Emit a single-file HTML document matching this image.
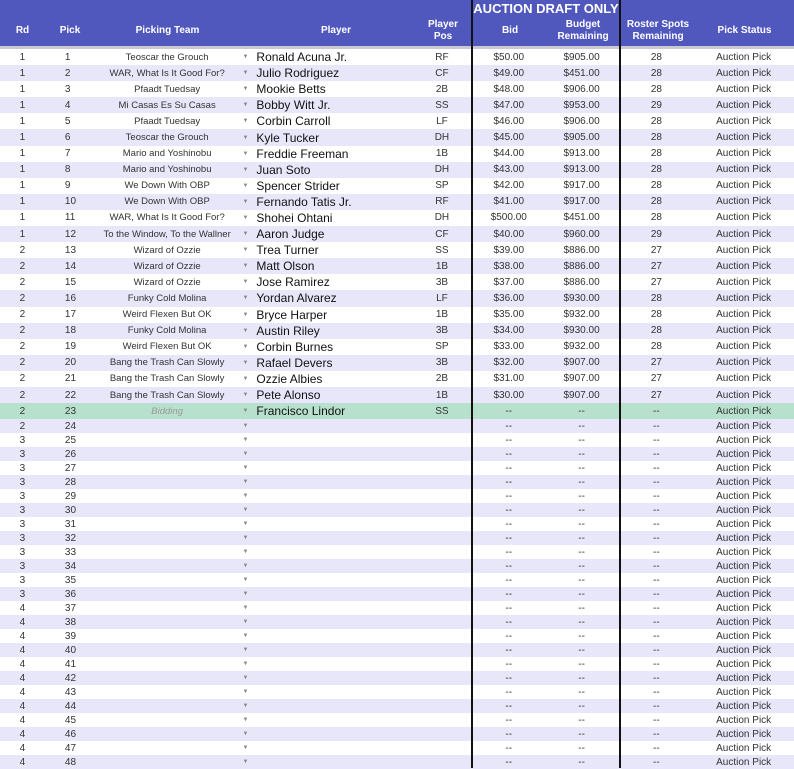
<!DOCTYPE html>
<html><head><meta charset="utf-8"><style>
*{margin:0;padding:0;box-sizing:border-box}
body{width:794px;height:768px;overflow:hidden;background:#fff;font-family:"Liberation Sans",sans-serif;font-size:10px;color:#333;position:relative}
.hdr{position:absolute;left:0;top:0;width:794px;height:46px;background:#5058be;color:#fff;font-weight:bold;font-size:10px}
.hdr div{position:absolute;text-align:center;line-height:12px;white-space:nowrap}
.sep{position:absolute;left:0;top:46px;width:794px;height:3px;background:#c9c9d4}
.r{display:flex;height:16.1px;align-items:center;white-space:nowrap}
.s{height:14px}
.r:nth-child(even){background:#e8e7fa}
.r.g{background:#b7e1cd}
.r span{display:block;text-align:center;overflow:hidden}
.a{width:45px}.b{width:50px;text-align:left!important;padding-left:20px}.c{width:145px;font-size:9.5px}
.d{width:12px;font-size:6px;color:#888}
.e{width:163px;text-align:left!important;font-size:12px;color:#111;padding-left:5px}
.f{width:56px}.h{width:74px}.i{width:72px}.j{width:74px}.k{width:101px}
.rows{position:absolute;top:49px;left:0;width:794px}
.vl{position:absolute;top:0;width:2px;height:768px;background:#111}
</style></head><body>
<div class="hdr">
<div style="left:0;width:45px;top:25px">Rd</div>
<div style="left:45px;width:50px;top:25px">Pick</div>
<div style="left:95px;width:145px;top:25px">Picking Team</div>
<div style="left:252px;width:168px;top:25px">Player</div>
<div style="left:415px;width:56px;top:19px">Player<br>Pos</div>
<div style="left:473px;width:146px;top:1px;font-size:13px;line-height:16px">AUCTION DRAFT ONLY</div>
<div style="left:473px;width:74px;top:25px">Bid</div>
<div style="left:547px;width:72px;top:19px">Budget<br>Remaining</div>
<div style="left:621px;width:74px;top:19px">Roster Spots<br>Remaining</div>
<div style="left:695px;width:99px;top:25px">Pick Status</div>
</div>
<div class="sep"></div>
<div class="rows">
<div class="r"><span class="a">1</span><span class="b">1</span><span class="c">Teoscar the Grouch</span><span class="d">▼</span><span class="e">Ronald Acuna Jr.</span><span class="f">RF</span><span style="width:2px"></span><span class="h">$50.00</span><span class="i">$905.00</span><span style="width:2px"></span><span class="j">28</span><span class="k">Auction Pick</span></div>
<div class="r"><span class="a">1</span><span class="b">2</span><span class="c">WAR, What Is It Good For?</span><span class="d">▼</span><span class="e">Julio Rodriguez</span><span class="f">CF</span><span style="width:2px"></span><span class="h">$49.00</span><span class="i">$451.00</span><span style="width:2px"></span><span class="j">28</span><span class="k">Auction Pick</span></div>
<div class="r"><span class="a">1</span><span class="b">3</span><span class="c">Pfaadt Tuedsay</span><span class="d">▼</span><span class="e">Mookie Betts</span><span class="f">2B</span><span style="width:2px"></span><span class="h">$48.00</span><span class="i">$906.00</span><span style="width:2px"></span><span class="j">28</span><span class="k">Auction Pick</span></div>
<div class="r"><span class="a">1</span><span class="b">4</span><span class="c">Mi Casas Es Su Casas</span><span class="d">▼</span><span class="e">Bobby Witt Jr.</span><span class="f">SS</span><span style="width:2px"></span><span class="h">$47.00</span><span class="i">$953.00</span><span style="width:2px"></span><span class="j">29</span><span class="k">Auction Pick</span></div>
<div class="r"><span class="a">1</span><span class="b">5</span><span class="c">Pfaadt Tuedsay</span><span class="d">▼</span><span class="e">Corbin Carroll</span><span class="f">LF</span><span style="width:2px"></span><span class="h">$46.00</span><span class="i">$906.00</span><span style="width:2px"></span><span class="j">28</span><span class="k">Auction Pick</span></div>
<div class="r"><span class="a">1</span><span class="b">6</span><span class="c">Teoscar the Grouch</span><span class="d">▼</span><span class="e">Kyle Tucker</span><span class="f">DH</span><span style="width:2px"></span><span class="h">$45.00</span><span class="i">$905.00</span><span style="width:2px"></span><span class="j">28</span><span class="k">Auction Pick</span></div>
<div class="r"><span class="a">1</span><span class="b">7</span><span class="c">Mario and Yoshinobu</span><span class="d">▼</span><span class="e">Freddie Freeman</span><span class="f">1B</span><span style="width:2px"></span><span class="h">$44.00</span><span class="i">$913.00</span><span style="width:2px"></span><span class="j">28</span><span class="k">Auction Pick</span></div>
<div class="r"><span class="a">1</span><span class="b">8</span><span class="c">Mario and Yoshinobu</span><span class="d">▼</span><span class="e">Juan Soto</span><span class="f">DH</span><span style="width:2px"></span><span class="h">$43.00</span><span class="i">$913.00</span><span style="width:2px"></span><span class="j">28</span><span class="k">Auction Pick</span></div>
<div class="r"><span class="a">1</span><span class="b">9</span><span class="c">We Down With OBP</span><span class="d">▼</span><span class="e">Spencer Strider</span><span class="f">SP</span><span style="width:2px"></span><span class="h">$42.00</span><span class="i">$917.00</span><span style="width:2px"></span><span class="j">28</span><span class="k">Auction Pick</span></div>
<div class="r"><span class="a">1</span><span class="b">10</span><span class="c">We Down With OBP</span><span class="d">▼</span><span class="e">Fernando Tatis Jr.</span><span class="f">RF</span><span style="width:2px"></span><span class="h">$41.00</span><span class="i">$917.00</span><span style="width:2px"></span><span class="j">28</span><span class="k">Auction Pick</span></div>
<div class="r"><span class="a">1</span><span class="b">11</span><span class="c">WAR, What Is It Good For?</span><span class="d">▼</span><span class="e">Shohei Ohtani</span><span class="f">DH</span><span style="width:2px"></span><span class="h">$500.00</span><span class="i">$451.00</span><span style="width:2px"></span><span class="j">28</span><span class="k">Auction Pick</span></div>
<div class="r"><span class="a">1</span><span class="b">12</span><span class="c">To the Window, To the Wallner</span><span class="d">▼</span><span class="e">Aaron Judge</span><span class="f">CF</span><span style="width:2px"></span><span class="h">$40.00</span><span class="i">$960.00</span><span style="width:2px"></span><span class="j">29</span><span class="k">Auction Pick</span></div>
<div class="r"><span class="a">2</span><span class="b">13</span><span class="c">Wizard of Ozzie</span><span class="d">▼</span><span class="e">Trea Turner</span><span class="f">SS</span><span style="width:2px"></span><span class="h">$39.00</span><span class="i">$886.00</span><span style="width:2px"></span><span class="j">27</span><span class="k">Auction Pick</span></div>
<div class="r"><span class="a">2</span><span class="b">14</span><span class="c">Wizard of Ozzie</span><span class="d">▼</span><span class="e">Matt Olson</span><span class="f">1B</span><span style="width:2px"></span><span class="h">$38.00</span><span class="i">$886.00</span><span style="width:2px"></span><span class="j">27</span><span class="k">Auction Pick</span></div>
<div class="r"><span class="a">2</span><span class="b">15</span><span class="c">Wizard of Ozzie</span><span class="d">▼</span><span class="e">Jose Ramirez</span><span class="f">3B</span><span style="width:2px"></span><span class="h">$37.00</span><span class="i">$886.00</span><span style="width:2px"></span><span class="j">27</span><span class="k">Auction Pick</span></div>
<div class="r"><span class="a">2</span><span class="b">16</span><span class="c">Funky Cold Molina</span><span class="d">▼</span><span class="e">Yordan Alvarez</span><span class="f">LF</span><span style="width:2px"></span><span class="h">$36.00</span><span class="i">$930.00</span><span style="width:2px"></span><span class="j">28</span><span class="k">Auction Pick</span></div>
<div class="r"><span class="a">2</span><span class="b">17</span><span class="c">Weird Flexen But OK</span><span class="d">▼</span><span class="e">Bryce Harper</span><span class="f">1B</span><span style="width:2px"></span><span class="h">$35.00</span><span class="i">$932.00</span><span style="width:2px"></span><span class="j">28</span><span class="k">Auction Pick</span></div>
<div class="r"><span class="a">2</span><span class="b">18</span><span class="c">Funky Cold Molina</span><span class="d">▼</span><span class="e">Austin Riley</span><span class="f">3B</span><span style="width:2px"></span><span class="h">$34.00</span><span class="i">$930.00</span><span style="width:2px"></span><span class="j">28</span><span class="k">Auction Pick</span></div>
<div class="r"><span class="a">2</span><span class="b">19</span><span class="c">Weird Flexen But OK</span><span class="d">▼</span><span class="e">Corbin Burnes</span><span class="f">SP</span><span style="width:2px"></span><span class="h">$33.00</span><span class="i">$932.00</span><span style="width:2px"></span><span class="j">28</span><span class="k">Auction Pick</span></div>
<div class="r"><span class="a">2</span><span class="b">20</span><span class="c">Bang the Trash Can Slowly</span><span class="d">▼</span><span class="e">Rafael Devers</span><span class="f">3B</span><span style="width:2px"></span><span class="h">$32.00</span><span class="i">$907.00</span><span style="width:2px"></span><span class="j">27</span><span class="k">Auction Pick</span></div>
<div class="r"><span class="a">2</span><span class="b">21</span><span class="c">Bang the Trash Can Slowly</span><span class="d">▼</span><span class="e">Ozzie Albies</span><span class="f">2B</span><span style="width:2px"></span><span class="h">$31.00</span><span class="i">$907.00</span><span style="width:2px"></span><span class="j">27</span><span class="k">Auction Pick</span></div>
<div class="r"><span class="a">2</span><span class="b">22</span><span class="c">Bang the Trash Can Slowly</span><span class="d">▼</span><span class="e">Pete Alonso</span><span class="f">1B</span><span style="width:2px"></span><span class="h">$30.00</span><span class="i">$907.00</span><span style="width:2px"></span><span class="j">27</span><span class="k">Auction Pick</span></div>
<div class="r g"><span class="a">2</span><span class="b">23</span><span class="c" style="color:#999;font-style:italic">Bidding</span><span class="d">▼</span><span class="e">Francisco Lindor</span><span class="f">SS</span><span style="width:2px"></span><span class="h">--</span><span class="i">--</span><span style="width:2px"></span><span class="j">--</span><span class="k">Auction Pick</span></div>
<div class="r s"><span class="a">2</span><span class="b">24</span><span class="c"></span><span class="d">▼</span><span class="e"></span><span class="f"></span><span style="width:2px"></span><span class="h">--</span><span class="i">--</span><span style="width:2px"></span><span class="j">--</span><span class="k">Auction Pick</span></div>
<div class="r s"><span class="a">3</span><span class="b">25</span><span class="c"></span><span class="d">▼</span><span class="e"></span><span class="f"></span><span style="width:2px"></span><span class="h">--</span><span class="i">--</span><span style="width:2px"></span><span class="j">--</span><span class="k">Auction Pick</span></div>
<div class="r s"><span class="a">3</span><span class="b">26</span><span class="c"></span><span class="d">▼</span><span class="e"></span><span class="f"></span><span style="width:2px"></span><span class="h">--</span><span class="i">--</span><span style="width:2px"></span><span class="j">--</span><span class="k">Auction Pick</span></div>
<div class="r s"><span class="a">3</span><span class="b">27</span><span class="c"></span><span class="d">▼</span><span class="e"></span><span class="f"></span><span style="width:2px"></span><span class="h">--</span><span class="i">--</span><span style="width:2px"></span><span class="j">--</span><span class="k">Auction Pick</span></div>
<div class="r s"><span class="a">3</span><span class="b">28</span><span class="c"></span><span class="d">▼</span><span class="e"></span><span class="f"></span><span style="width:2px"></span><span class="h">--</span><span class="i">--</span><span style="width:2px"></span><span class="j">--</span><span class="k">Auction Pick</span></div>
<div class="r s"><span class="a">3</span><span class="b">29</span><span class="c"></span><span class="d">▼</span><span class="e"></span><span class="f"></span><span style="width:2px"></span><span class="h">--</span><span class="i">--</span><span style="width:2px"></span><span class="j">--</span><span class="k">Auction Pick</span></div>
<div class="r s"><span class="a">3</span><span class="b">30</span><span class="c"></span><span class="d">▼</span><span class="e"></span><span class="f"></span><span style="width:2px"></span><span class="h">--</span><span class="i">--</span><span style="width:2px"></span><span class="j">--</span><span class="k">Auction Pick</span></div>
<div class="r s"><span class="a">3</span><span class="b">31</span><span class="c"></span><span class="d">▼</span><span class="e"></span><span class="f"></span><span style="width:2px"></span><span class="h">--</span><span class="i">--</span><span style="width:2px"></span><span class="j">--</span><span class="k">Auction Pick</span></div>
<div class="r s"><span class="a">3</span><span class="b">32</span><span class="c"></span><span class="d">▼</span><span class="e"></span><span class="f"></span><span style="width:2px"></span><span class="h">--</span><span class="i">--</span><span style="width:2px"></span><span class="j">--</span><span class="k">Auction Pick</span></div>
<div class="r s"><span class="a">3</span><span class="b">33</span><span class="c"></span><span class="d">▼</span><span class="e"></span><span class="f"></span><span style="width:2px"></span><span class="h">--</span><span class="i">--</span><span style="width:2px"></span><span class="j">--</span><span class="k">Auction Pick</span></div>
<div class="r s"><span class="a">3</span><span class="b">34</span><span class="c"></span><span class="d">▼</span><span class="e"></span><span class="f"></span><span style="width:2px"></span><span class="h">--</span><span class="i">--</span><span style="width:2px"></span><span class="j">--</span><span class="k">Auction Pick</span></div>
<div class="r s"><span class="a">3</span><span class="b">35</span><span class="c"></span><span class="d">▼</span><span class="e"></span><span class="f"></span><span style="width:2px"></span><span class="h">--</span><span class="i">--</span><span style="width:2px"></span><span class="j">--</span><span class="k">Auction Pick</span></div>
<div class="r s"><span class="a">3</span><span class="b">36</span><span class="c"></span><span class="d">▼</span><span class="e"></span><span class="f"></span><span style="width:2px"></span><span class="h">--</span><span class="i">--</span><span style="width:2px"></span><span class="j">--</span><span class="k">Auction Pick</span></div>
<div class="r s"><span class="a">4</span><span class="b">37</span><span class="c"></span><span class="d">▼</span><span class="e"></span><span class="f"></span><span style="width:2px"></span><span class="h">--</span><span class="i">--</span><span style="width:2px"></span><span class="j">--</span><span class="k">Auction Pick</span></div>
<div class="r s"><span class="a">4</span><span class="b">38</span><span class="c"></span><span class="d">▼</span><span class="e"></span><span class="f"></span><span style="width:2px"></span><span class="h">--</span><span class="i">--</span><span style="width:2px"></span><span class="j">--</span><span class="k">Auction Pick</span></div>
<div class="r s"><span class="a">4</span><span class="b">39</span><span class="c"></span><span class="d">▼</span><span class="e"></span><span class="f"></span><span style="width:2px"></span><span class="h">--</span><span class="i">--</span><span style="width:2px"></span><span class="j">--</span><span class="k">Auction Pick</span></div>
<div class="r s"><span class="a">4</span><span class="b">40</span><span class="c"></span><span class="d">▼</span><span class="e"></span><span class="f"></span><span style="width:2px"></span><span class="h">--</span><span class="i">--</span><span style="width:2px"></span><span class="j">--</span><span class="k">Auction Pick</span></div>
<div class="r s"><span class="a">4</span><span class="b">41</span><span class="c"></span><span class="d">▼</span><span class="e"></span><span class="f"></span><span style="width:2px"></span><span class="h">--</span><span class="i">--</span><span style="width:2px"></span><span class="j">--</span><span class="k">Auction Pick</span></div>
<div class="r s"><span class="a">4</span><span class="b">42</span><span class="c"></span><span class="d">▼</span><span class="e"></span><span class="f"></span><span style="width:2px"></span><span class="h">--</span><span class="i">--</span><span style="width:2px"></span><span class="j">--</span><span class="k">Auction Pick</span></div>
<div class="r s"><span class="a">4</span><span class="b">43</span><span class="c"></span><span class="d">▼</span><span class="e"></span><span class="f"></span><span style="width:2px"></span><span class="h">--</span><span class="i">--</span><span style="width:2px"></span><span class="j">--</span><span class="k">Auction Pick</span></div>
<div class="r s"><span class="a">4</span><span class="b">44</span><span class="c"></span><span class="d">▼</span><span class="e"></span><span class="f"></span><span style="width:2px"></span><span class="h">--</span><span class="i">--</span><span style="width:2px"></span><span class="j">--</span><span class="k">Auction Pick</span></div>
<div class="r s"><span class="a">4</span><span class="b">45</span><span class="c"></span><span class="d">▼</span><span class="e"></span><span class="f"></span><span style="width:2px"></span><span class="h">--</span><span class="i">--</span><span style="width:2px"></span><span class="j">--</span><span class="k">Auction Pick</span></div>
<div class="r s"><span class="a">4</span><span class="b">46</span><span class="c"></span><span class="d">▼</span><span class="e"></span><span class="f"></span><span style="width:2px"></span><span class="h">--</span><span class="i">--</span><span style="width:2px"></span><span class="j">--</span><span class="k">Auction Pick</span></div>
<div class="r s"><span class="a">4</span><span class="b">47</span><span class="c"></span><span class="d">▼</span><span class="e"></span><span class="f"></span><span style="width:2px"></span><span class="h">--</span><span class="i">--</span><span style="width:2px"></span><span class="j">--</span><span class="k">Auction Pick</span></div>
<div class="r s"><span class="a">4</span><span class="b">48</span><span class="c"></span><span class="d">▼</span><span class="e"></span><span class="f"></span><span style="width:2px"></span><span class="h">--</span><span class="i">--</span><span style="width:2px"></span><span class="j">--</span><span class="k">Auction Pick</span></div>
</div>
<div class="vl" style="left:471px"></div>
<div class="vl" style="left:619px"></div>
</body></html>
